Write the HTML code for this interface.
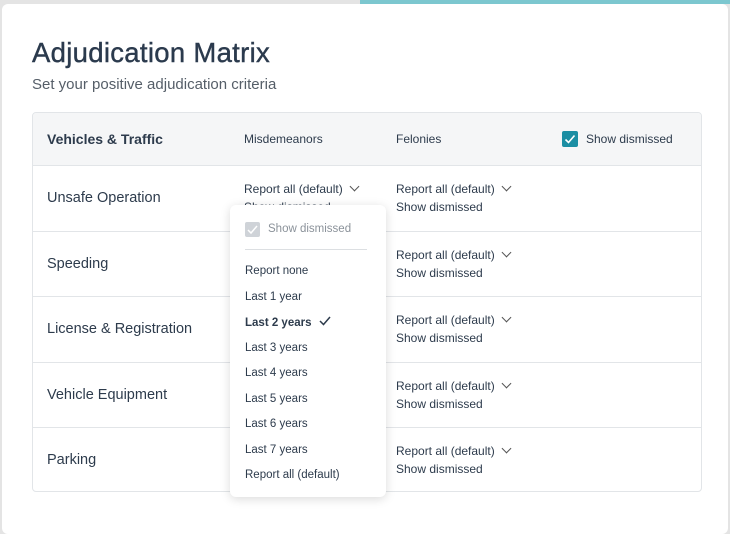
<!DOCTYPE html>
<html><head><style>
*{margin:0;padding:0;box-sizing:border-box}
body{width:730px;height:522px;background:#e4e4e4;font-family:"Liberation Sans",sans-serif;color:#2d3b4c;position:relative;overflow:hidden}
.strip{position:absolute;top:0;left:360px;width:370px;height:4px;background:#7cc7cf}
.card{position:absolute;left:2px;top:4px;width:726px;height:530px;background:#fff;border-radius:6px}
h1{position:absolute;left:32px;top:37px;font-size:27.5px;font-weight:normal;color:#2b3a4d;letter-spacing:.3px;-webkit-text-stroke:.4px #2b3a4d}
.sub{position:absolute;left:32px;top:76px;font-size:15px;color:#555e68}
.tbl{position:absolute;left:32px;top:112px;width:670px;height:380px;border:1px solid #e2e5e8;border-radius:4px;overflow:hidden}
.hdr{height:53px;background:#f5f6f7;border-bottom:1px solid #e2e5e8;position:relative}
.row{height:65.5px;border-bottom:1px solid #e2e5e8;position:relative}
.row:last-child{border-bottom:none}
.t{position:absolute;font-size:13px;white-space:nowrap}
.lbl{left:14px;font-size:14.5px;color:#2d3b4c}
.sm{font-size:12px;color:#2d3b4c}
.chev{display:inline-block;width:7px;height:7px;border-right:1.3px solid #555;border-bottom:1.3px solid #555;transform:rotate(45deg);margin-left:8px;position:relative;top:-3px}
.cb{position:absolute;left:529px;top:18px;width:16px;height:16px;background:#1b8ea3;border-radius:2px}
.dd{position:absolute;left:230px;top:205px;width:156px;height:292px;background:#fff;border-radius:6px;box-shadow:0 2px 10px rgba(0,0,0,.15)}
.dd .i{position:absolute;left:15px;font-size:11.5px;color:#2d3b4c}
</style></head><body>
<div class="strip"></div>
<div class="card"></div>
<h1>Adjudication Matrix</h1>
<div class="sub">Set your positive adjudication criteria</div>
<div class="tbl">
 <div class="hdr">
  <div class="t lbl" style="top:18px;font-weight:bold;font-size:14px">Vehicles &amp; Traffic</div>
  <div class="t sm" style="left:211px;top:19px">Misdemeanors</div>
  <div class="t sm" style="left:363px;top:19px">Felonies</div>
  <div class="cb"><svg width="16" height="16"><path d="M3.5 8.5l3 3 6-7" stroke="#fff" stroke-width="1.6" fill="none"/></svg></div>
  <div class="t sm" style="left:553px;top:19px">Show dismissed</div>
 </div>
 <div class="row">
  <div class="t lbl" style="top:24px">Unsafe Operation</div>
  <div class="t sm" style="left:211px;top:16px">Report all (default)<span class="chev"></span></div>
  <div class="t sm" style="left:211px;top:34px">Show dismissed</div>
  <div class="t sm" style="left:363px;top:16px">Report all (default)<span class="chev"></span></div>
  <div class="t sm" style="left:363px;top:34px">Show dismissed</div>
 </div>
 <div class="row"><div class="t lbl" style="top:24px">Speeding</div>
  <div class="t sm" style="left:363px;top:16px">Report all (default)<span class="chev"></span></div>
  <div class="t sm" style="left:363px;top:34px">Show dismissed</div></div>
 <div class="row"><div class="t lbl" style="top:24px">License &amp; Registration</div>
  <div class="t sm" style="left:363px;top:16px">Report all (default)<span class="chev"></span></div>
  <div class="t sm" style="left:363px;top:34px">Show dismissed</div></div>
 <div class="row"><div class="t lbl" style="top:24px">Vehicle Equipment</div>
  <div class="t sm" style="left:363px;top:16px">Report all (default)<span class="chev"></span></div>
  <div class="t sm" style="left:363px;top:34px">Show dismissed</div></div>
 <div class="row"><div class="t lbl" style="top:24px">Parking</div>
  <div class="t sm" style="left:363px;top:16px">Report all (default)<span class="chev"></span></div>
  <div class="t sm" style="left:363px;top:34px">Show dismissed</div></div>
</div>
<div class="dd">
 <div style="position:absolute;left:15px;top:17px;width:15px;height:15px;background:#cfd3d8;border-radius:2px"><svg width="15" height="15"><path d="M3 8l3 3 6-7" stroke="#fff" stroke-width="1.5" fill="none"/></svg></div>
 <div class="i" style="left:38px;top:18px;color:#8b929a">Show dismissed</div>
 <div style="position:absolute;left:15px;top:44px;width:122px;height:1px;background:#dcdfe2"></div>
 <div class="i" style="top:60px">Report none</div>
 <div class="i" style="top:86px">Last 1 year</div>
 <div class="i" style="top:111px;font-weight:bold">Last 2 years <svg width="12" height="10" style="margin-left:4px"><path d="M1 5l3.5 3.5L11 1" stroke="#2d3b4c" stroke-width="1.5" fill="none"/></svg></div>
 <div class="i" style="top:137px">Last 3 years</div>
 <div class="i" style="top:162px">Last 4 years</div>
 <div class="i" style="top:188px">Last 5 years</div>
 <div class="i" style="top:213px">Last 6 years</div>
 <div class="i" style="top:239px">Last 7 years</div>
 <div class="i" style="top:264px">Report all (default)</div>
</div>
</body></html>
